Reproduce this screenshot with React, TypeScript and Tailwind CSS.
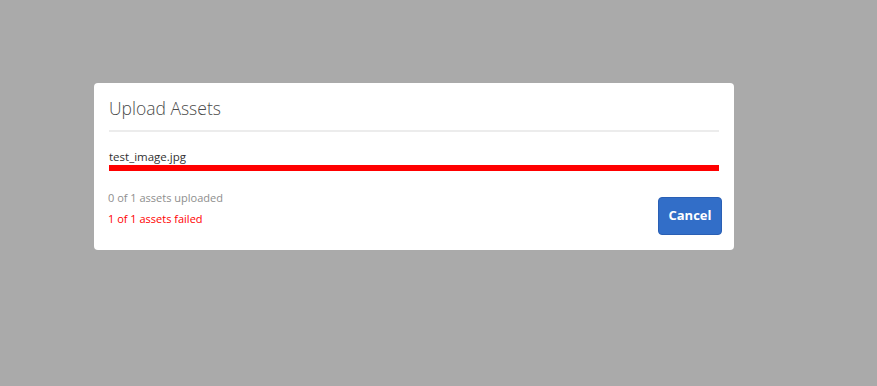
export default function App() {
  return (
    <div
      className="h-[386px] w-[877px] bg-[#aaaaaa] pt-[83px] pl-[94px]"
      style={{ fontFamily: '"Open Sans", "Liberation Sans", sans-serif' }}
    >
      <div className="flex w-[640px] flex-col rounded-[4px] bg-white px-[15px] pt-[13px] pb-[15px]">
        <div className="text-[17.5px] font-light leading-[24px] text-[#4b4b4b]">Upload Assets</div>
        <div className="mt-[10px] h-[2px] bg-[#ececec]" />
        <div className="mt-[18px] text-[11.5px] leading-[14px] text-[#323232]">test_image.jpg</div>
        <div className="mt-[1px] h-[6px] bg-[#ff0000]" />
        <div className="mt-[16px] flex items-start justify-between">
          <div className="ml-[-1px] flex flex-col text-[11px] leading-[21px]">
            <span className="text-[#8e8e8e]">0 of 1 assets uploaded</span>
            <span className="text-[#ff0000]">1 of 1 assets failed</span>
          </div>
          <button className="mt-[10px] mr-[-3px] h-[38px] w-[64px] rounded-[4px] border border-[#2a5fb4] bg-[#326ec8] text-[13px] font-bold text-white">
            Cancel
          </button>
        </div>
      </div>
    </div>
  );
}
